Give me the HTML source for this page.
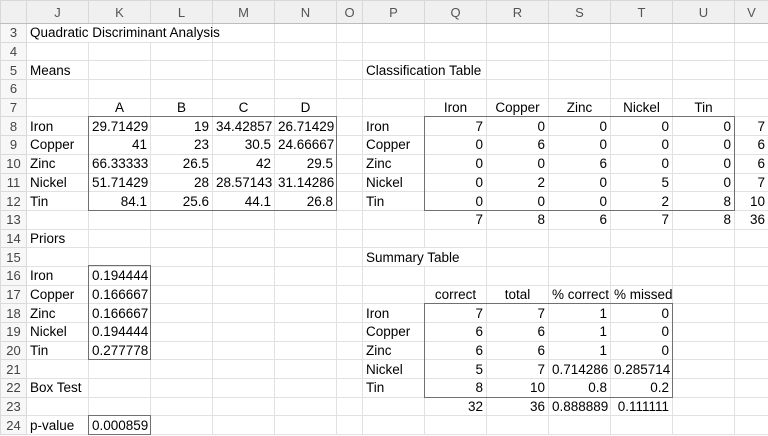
<!DOCTYPE html>
<html><head><meta charset="utf-8"><style>
body{margin:0;width:768px;height:436px;overflow:hidden;background:#fff;font-family:"Liberation Sans",Arial,sans-serif;font-size:13.5px;color:#000;position:relative}
table{border-collapse:collapse;table-layout:fixed;position:absolute;left:0;top:0;width:768px}
td{border:1px solid #e1e1e1;height:17.7px;padding:0 3px;white-space:nowrap;overflow:visible;line-height:17px}
tr.h td{height:22px;background:#f0f0f0;color:#555;text-align:center;border-color:#d8d8d8;border-bottom:1px solid #bdbdbd;font-size:13px}
td.rn{background:#f7f7f7;color:#444;text-align:center;padding:0;border-color:#dadada;font-size:13px}
.r{text-align:right}.c{text-align:center}
.box{position:absolute;border:1.5px solid #707070;box-sizing:border-box}
</style></head><body>
<table>
<colgroup><col style="width:26px"><col style="width:62px"><col style="width:62px"><col style="width:62px"><col style="width:62px"><col style="width:62px"><col style="width:26px"><col style="width:62px"><col style="width:62px"><col style="width:62px"><col style="width:62px"><col style="width:62px"><col style="width:62px"><col style="width:34px"></colgroup>
<tr class="h"><td></td><td>J</td><td>K</td><td>L</td><td>M</td><td>N</td><td>O</td><td>P</td><td>Q</td><td>R</td><td>S</td><td>T</td><td>U</td><td>V</td></tr>
<tr><td class="rn">3</td><td colspan="3">Quadratic Discriminant Analysis</td><td></td><td></td><td></td><td></td><td></td><td></td><td></td><td></td><td></td><td></td></tr>
<tr><td class="rn">4</td><td></td><td></td><td></td><td></td><td></td><td></td><td></td><td></td><td></td><td></td><td></td><td></td><td></td></tr>
<tr><td class="rn">5</td><td>Means</td><td></td><td></td><td></td><td></td><td></td><td colspan="2">Classification Table</td><td></td><td></td><td></td><td></td><td></td></tr>
<tr><td class="rn">6</td><td></td><td></td><td></td><td></td><td></td><td></td><td></td><td></td><td></td><td></td><td></td><td></td><td></td></tr>
<tr><td class="rn">7</td><td></td><td class="c">A</td><td class="c">B</td><td class="c">C</td><td class="c">D</td><td></td><td></td><td class="c">Iron</td><td class="c">Copper</td><td class="c">Zinc</td><td class="c">Nickel</td><td class="c">Tin</td><td></td></tr>
<tr><td class="rn">8</td><td>Iron</td><td class="r">29.71429</td><td class="r">19</td><td class="r">34.42857</td><td class="r">26.71429</td><td></td><td>Iron</td><td class="r">7</td><td class="r">0</td><td class="r">0</td><td class="r">0</td><td class="r">0</td><td class="r">7</td></tr>
<tr><td class="rn">9</td><td>Copper</td><td class="r">41</td><td class="r">23</td><td class="r">30.5</td><td class="r">24.66667</td><td></td><td>Copper</td><td class="r">0</td><td class="r">6</td><td class="r">0</td><td class="r">0</td><td class="r">0</td><td class="r">6</td></tr>
<tr><td class="rn">10</td><td>Zinc</td><td class="r">66.33333</td><td class="r">26.5</td><td class="r">42</td><td class="r">29.5</td><td></td><td>Zinc</td><td class="r">0</td><td class="r">0</td><td class="r">6</td><td class="r">0</td><td class="r">0</td><td class="r">6</td></tr>
<tr><td class="rn">11</td><td>Nickel</td><td class="r">51.71429</td><td class="r">28</td><td class="r">28.57143</td><td class="r">31.14286</td><td></td><td>Nickel</td><td class="r">0</td><td class="r">2</td><td class="r">0</td><td class="r">5</td><td class="r">0</td><td class="r">7</td></tr>
<tr><td class="rn">12</td><td>Tin</td><td class="r">84.1</td><td class="r">25.6</td><td class="r">44.1</td><td class="r">26.8</td><td></td><td>Tin</td><td class="r">0</td><td class="r">0</td><td class="r">0</td><td class="r">2</td><td class="r">8</td><td class="r">10</td></tr>
<tr><td class="rn">13</td><td></td><td></td><td></td><td></td><td></td><td></td><td></td><td class="r">7</td><td class="r">8</td><td class="r">6</td><td class="r">7</td><td class="r">8</td><td class="r">36</td></tr>
<tr><td class="rn">14</td><td>Priors</td><td></td><td></td><td></td><td></td><td></td><td></td><td></td><td></td><td></td><td></td><td></td><td></td></tr>
<tr><td class="rn">15</td><td></td><td></td><td></td><td></td><td></td><td></td><td colspan="2">Summary Table</td><td></td><td></td><td></td><td></td><td></td></tr>
<tr><td class="rn">16</td><td>Iron</td><td>0.194444</td><td></td><td></td><td></td><td></td><td></td><td></td><td></td><td></td><td></td><td></td><td></td></tr>
<tr><td class="rn">17</td><td>Copper</td><td>0.166667</td><td></td><td></td><td></td><td></td><td></td><td class="c">correct</td><td class="c">total</td><td class="c">% correct</td><td class="c">% missed</td><td></td><td></td></tr>
<tr><td class="rn">18</td><td>Zinc</td><td>0.166667</td><td></td><td></td><td></td><td></td><td>Iron</td><td class="r">7</td><td class="r">7</td><td class="r">1</td><td class="r">0</td><td></td><td></td></tr>
<tr><td class="rn">19</td><td>Nickel</td><td>0.194444</td><td></td><td></td><td></td><td></td><td>Copper</td><td class="r">6</td><td class="r">6</td><td class="r">1</td><td class="r">0</td><td></td><td></td></tr>
<tr><td class="rn">20</td><td>Tin</td><td>0.277778</td><td></td><td></td><td></td><td></td><td>Zinc</td><td class="r">6</td><td class="r">6</td><td class="r">1</td><td class="r">0</td><td></td><td></td></tr>
<tr><td class="rn">21</td><td></td><td></td><td></td><td></td><td></td><td></td><td>Nickel</td><td class="r">5</td><td class="r">7</td><td class="r">0.714286</td><td class="r">0.285714</td><td></td><td></td></tr>
<tr><td class="rn">22</td><td>Box Test</td><td></td><td></td><td></td><td></td><td></td><td>Tin</td><td class="r">8</td><td class="r">10</td><td class="r">0.8</td><td class="r">0.2</td><td></td><td></td></tr>
<tr><td class="rn">23</td><td></td><td></td><td></td><td></td><td></td><td></td><td></td><td class="r">32</td><td class="r">36</td><td class="r">0.888889</td><td class="r">0.111111</td><td></td><td></td></tr>
<tr><td class="rn">24</td><td>p-value</td><td>0.000859</td><td></td><td></td><td></td><td></td><td></td><td></td><td></td><td></td><td></td><td></td><td></td></tr>
</table>
<div class="box" style="left:88px;top:116px;width:249px;height:95px"></div>
<div class="box" style="left:424px;top:116px;width:311px;height:95px"></div>
<div class="box" style="left:88px;top:265px;width:63px;height:95px"></div>
<div class="box" style="left:424px;top:303px;width:249px;height:95px"></div>
<div class="box" style="left:88px;top:415px;width:63px;height:20px"></div>
</body></html>
